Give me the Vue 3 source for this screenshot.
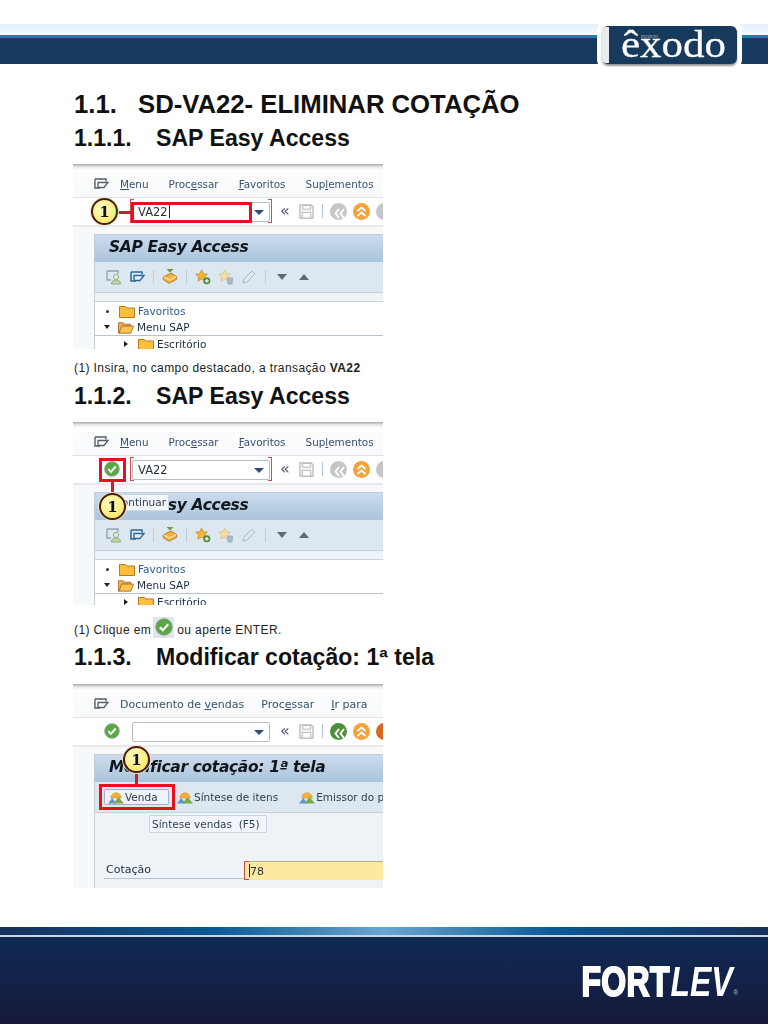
<template>
  <div class="page">
    <svg class="defs" width="0" height="0" aria-hidden="true">
      <defs>
        <symbol id="i-menu" viewBox="0 0 16 14">
          <path d="M2 2h11v2.5M2 2v9h5" fill="none" stroke="#52606e" stroke-width="1.4" />
          <path d="M5 5.5h10l-4 5H5z" fill="#fff" stroke="#52606e" stroke-width="1.3" />
        </symbol>
        <symbol id="i-check" viewBox="0 0 18 18">
          <circle cx="9" cy="9" r="8.2" fill="#5aa845" stroke="#8f9a88" stroke-width="1" />
          <path d="M4.8 9.2l3 3 5.4-6" fill="none" stroke="#fff" stroke-width="2.2" />
        </symbol>
        <symbol id="i-save" viewBox="0 0 16 16">
          <path d="M1 1h12l2 2v12H1z" fill="#f2f3f4" stroke="#b4b9bd" stroke-width="1.3" />
          <path d="M4 1.5h8v4H4zM3.5 9h9v6h-9z" fill="#fff" stroke="#b4b9bd" />
        </symbol>
        <symbol id="i-chev-left" viewBox="0 0 17 17">
          <path d="M9 6L5.5 10.5 9 15M14 6l-3.5 4.5L14 15" fill="none" stroke="#fff" stroke-width="2" />
        </symbol>
        <symbol id="i-chev-up" viewBox="0 0 17 17">
          <path d="M4.5 8l4-3.500 4 3.500M4.500 13l4-3.500 4 3.500" fill="none" stroke="#fff" stroke-width="1.7" />
        </symbol>
        <symbol id="i-folder" viewBox="0 0 16 13">
          <path d="M.5 1.5h6l1 1.5h8v9.5H.5z" fill="#fcbf3c" stroke="#b87a16" />
        </symbol>
        <symbol id="i-folder-open" viewBox="0 0 17 13">
          <path d="M.5 1.5h5l1 1.5h7v2H4L1.5 12.5H.5z" fill="#f3b24a" stroke="#b0702a" />
          <path d="M3.8 5h12.700l-3 7.500H1.200z" fill="#fcc552" stroke="#b0702a" />
        </symbol>
        <symbol id="i-user" viewBox="0 0 16 16">
          <path d="M1 2h11v3M1 2v9h4" fill="none" stroke="#8ea3b4" stroke-width="1.3" />
          <circle cx="10" cy="8" r="2.5" fill="#e6efe0" stroke="#8fa97e" />
          <path d="M5.5 15c0-3 2-4 4.500-4s4.500 1 4.500 4z" fill="#c3d6a8" stroke="#8fa97e" />
        </symbol>
        <symbol id="i-open" viewBox="0 0 16 14">
          <path d="M2 2h11v2.500M2 2v9h5" fill="none" stroke="#2a6a9c" stroke-width="1.5" />
          <path d="M5 5.5h10l-4 5H5z" fill="#e6f0f8" stroke="#2a6a9c" stroke-width="1.4" />
        </symbol>
        <symbol id="i-box" viewBox="0 0 18 18">
          <path d="M5 0h8L9 4z" fill="#6a9a48" />
          <path d="M1.5 9L10 4.500l6.500 4v3L8 16l-6.500-4z" fill="#f4b13c" stroke="#b46f20" />
          <path d="M2 9l6.500 3.500L16 8.500" fill="none" stroke="#fbe6b2" stroke-width="1.3" />
        </symbol>
        <symbol id="i-star-add" viewBox="0 0 17 17">
          <path d="M7 1l1.900 4 4.300.5-3.100 3 .8 4.300L7 10.700l-3.900 2.100.8-4.300-3.100-3 4.300-.5z" fill="#f5b531" stroke="#b9802a" stroke-width=".7" />
          <circle cx="12.5" cy="12.5" r="3.8" fill="#4e8c3f" />
          <path d="M10.5 12.5h4M12.5 10.5v4" stroke="#fff" stroke-width="1.3" />
        </symbol>
        <symbol id="i-star-del" viewBox="0 0 17 17">
          <path d="M7 1l1.900 4 4.300.5-3.100 3 .8 4.300L7 10.700l-3.900 2.100.8-4.300-3.100-3 4.300-.5z" fill="#f6dca0" stroke="#cdb98c" stroke-width=".7" />
          <path d="M10 9.5h5.500l-.6 6.500h-4.300z" fill="#a9bccb" stroke="#8ba0b2" stroke-width=".7" />
        </symbol>
        <symbol id="i-pencil" viewBox="0 0 16 16">
          <path d="M2 14l1-4 8-8 3 3-8 8z" fill="#dfe6ec" stroke="#a9b5bf" />
        </symbol>
        <symbol id="i-hill" viewBox="0 0 17 14">
          <path d="M3 8a5.500 5.500 0 0 1 11 0z" fill="#f5b03a" stroke="#d98b20" stroke-width=".6" />
          <path d="M0 14l4.500-6L9 14z" fill="#5c95c8" />
          <path d="M6 14l5-7 6 7z" fill="#77ab4d" />
        </symbol>
      </defs>
    </svg>

    <header class="top">
      <div class="top-band"></div>
      <div class="logo">
        <div class="logo-inner">
          <span class="logo-tab"></span>
          <span class="logo-word">êxodo</span>
          <span class="logo-small">PROJETO</span>
        </div>
      </div>
    </header>

    <main class="doc">
      <h1 class="h1"><span class="h1-num">1.1.</span>SD-VA22- ELIMINAR COTAÇÃO</h1>

      <section v-for="s in sections" :key="s.num" class="sec" :class="s.id">
        <h2 class="h2"><span class="h2-num">{{ s.num }}</span>{{ s.title }}</h2>

        <div class="shot">
          <div class="menu-row">
            <svg class="menu-ico"><use href="#i-menu" /></svg>
            <span v-for="m in s.menu" :key="m[0]" class="menu-item">{{ m[0] }}<u>{{ m[1] }}</u>{{ m[2] }}</span>
          </div>

          <div class="tool-row">
            <span class="check-slot">
              <svg v-if="s.check" class="check"><use href="#i-check" /></svg>
            </span>
            <div class="field-wrap">
              <span class="cmd-field">
                <span class="cmd-text">{{ s.cmd }}<i v-if="s.id === 's1'" class="text-caret"></i></span>
                <span class="cmd-arrow"></span>
              </span>
            </div>
            <span class="dbl">«</span>
            <svg class="save"><use href="#i-save" /></svg>
            <span class="vsep"></span>
            <span class="round" :class="s.id === 's3' ? 'green' : 'grey'">
              <svg><use href="#i-chev-left" /></svg>
            </span>
            <span class="round orange"><svg><use href="#i-chev-up" /></svg></span>
            <span class="round" :class="s.id === 's3' ? 'dark-orange' : 'grey'"></span>
          </div>

          <div class="panel">
            <div class="panel-title">{{ s.panel }}</div>

            <div v-if="s.id !== 's3'" class="panel-tools">
              <svg class="pi"><use href="#i-user" /></svg>
              <svg class="pi"><use href="#i-open" /></svg>
              <span class="psep"></span>
              <svg class="pi"><use href="#i-box" /></svg>
              <span class="psep"></span>
              <svg class="pi"><use href="#i-star-add" /></svg>
              <svg class="pi"><use href="#i-star-del" /></svg>
              <svg class="pi"><use href="#i-pencil" /></svg>
              <span class="psep"></span>
              <span class="tri-down"></span>
              <span class="tri-up"></span>
            </div>
            <div v-else class="panel-tools buttons">
              <span class="sap-btn boxed"><svg class="hill"><use href="#i-hill" /></svg>Venda</span>
              <span class="sap-btn"><svg class="hill"><use href="#i-hill" /></svg>Síntese de itens</span>
              <span class="sap-btn"><svg class="hill"><use href="#i-hill" /></svg>Emissor do p</span>
            </div>

            <div v-if="s.id !== 's3'" class="tree">
              <div class="tree-row first"><span class="bullet"></span><svg class="folder"><use href="#i-folder" /></svg><span class="fav">Favoritos</span></div>
              <div class="tree-row line"><span class="caret-down"></span><svg class="folder"><use href="#i-folder-open" /></svg>Menu SAP</div>
              <div class="tree-row sub"><span class="caret-right"></span><svg class="folder"><use href="#i-folder" /></svg>Escritório</div>
            </div>
            <div v-else class="form">
              <span class="form-label">Cotação</span>
              <span class="form-input"><i class="req"></i><i class="text-caret"></i>78</span>
            </div>
          </div>

          <!-- anotações por cima do print -->
          <span class="mark"></span>
          <span class="lead"></span>
          <span v-if="s.tip" class="tip">{{ s.tip }}</span>
          <span class="bubble">1</span>
        </div>

        <p v-if="s.id === 's1'" class="cap">(1) Insira, no campo destacado, a transação <b>VA22</b></p>
        <p v-if="s.id === 's2'" class="cap">(1) Clique em<span class="cap-ico"><svg><use href="#i-check" /></svg></span>ou aperte ENTER.</p>
      </section>
    </main>

    <footer class="foot">
      <div class="foot-strip"></div>
      <div class="foot-body">
        <span class="brand"><b>FORT</b><i>LEV</i><small>®</small></span>
      </div>
    </footer>
  </div>
</template>

<script setup>
const sapMenu = [
  ["", "M", "enu"],
  ["Proc", "e", "ssar"],
  ["", "F", "avoritos"],
  ["Sup", "l", "ementos"],
];

const sections = [
  {
    id: "s1",
    num: "1.1.1.",
    title: "SAP Easy Access",
    menu: sapMenu,
    check: false,
    cmd: "VA22",
    panel: "SAP Easy Access",
  },
  {
    id: "s2",
    num: "1.1.2.",
    title: "SAP Easy Access",
    menu: sapMenu,
    check: true,
    cmd: "VA22",
    panel: "SAP Easy Access",
    tip: "Continuar",
  },
  {
    id: "s3",
    num: "1.1.3.",
    title: "Modificar cotação: 1ª tela",
    menu: [
      ["Documento de ", "v", "endas"],
      ["Proc", "e", "ssar"],
      ["", "I", "r para"],
    ],
    check: true,
    cmd: "",
    panel: "Modificar cotação: 1ª tela",
    tip: "Síntese vendas  (F5)",
  },
];
</script>

<style>
html,
body {
  margin: 0;
  background: #fff;
}
</style>

<style scoped>
.page {
  width: 768px;
  height: 1024px;
  overflow: hidden;
  background: #fff;
  font-family: "Liberation Sans", Arial, sans-serif;
  color: #111;
}

.defs {
  position: absolute;
}

/* topo */
.top {
  position: relative;
  height: 64px;
}

.top-band {
  position: absolute;
  left: 0;
  right: 0;
  top: 24px;
  height: 40px;
  background: linear-gradient(
    to bottom,
    #e4f1fb 0,
    #f3f9fd 11px,
    #1c7fb0 11px,
    #1c7fb0 14px,
    #163b5e 14px,
    #163b5e 100%
  );
}

.logo {
  position: absolute;
  left: 597px;
  top: 22px;
  width: 145px;
  height: 46px;
  background: #fff;
  border-radius: 8px;
  display: flex;
  align-items: center;
  justify-content: center;
}

.logo-inner {
  position: relative;
  width: 135px;
  height: 38px;
  background: #173a5c;
  border-radius: 6px;
  box-shadow: 0 2px 2px rgba(60, 70, 80, 0.55);
  display: flex;
  align-items: center;
  padding-left: 19px;
  box-sizing: border-box;
}

.logo-tab {
  position: absolute;
  left: 0;
  top: 1px;
  bottom: 1px;
  width: 7px;
  background: #e8ecef;
  border-radius: 4px 0 0 4px;
}

.logo-word {
  font-family: "Liberation Serif", serif;
  font-size: 43px;
  line-height: 38px;
  color: #fff;
  transform: scaleY(0.88);
  -webkit-text-stroke: 0.3px #fff;
}

.logo-small {
  position: absolute;
  left: 39px;
  top: 8px;
  font-family: "Liberation Serif", serif;
  font-size: 4px;
  color: #b9c6d2;
}

/* documento */
.doc {
  padding-left: 74px;
}

.h1 {
  margin: 26px 0 0;
  font-size: 25.7px;
  line-height: 28px;
  font-weight: 700;
  white-space: nowrap;
}

.h1-num {
  display: inline-block;
  width: 64px;
}

.h2 {
  margin: 0;
  font-size: 23.1px;
  line-height: 26px;
  font-weight: 700;
  white-space: nowrap;
}

.h2-num {
  display: inline-block;
  width: 82px;
}

.sec {
  margin-top: 7px;
}

.s3 {
  margin-top: 6px;
}

.cap {
  margin: 11px 0 0;
  height: 16px;
  font-size: 12px;
  line-height: 16px;
  letter-spacing: 0.4px;
  color: #222;
  white-space: nowrap;
}

.s2 .cap {
  margin-top: 17px;
  display: flex;
  align-items: center;
}

.cap-ico {
  width: 21px;
  height: 21px;
  margin: -6px 3px 0 2px;
  background: #dbe6ef;
  display: flex;
  align-items: center;
  justify-content: center;
}

.cap-ico svg {
  width: 18px;
  height: 18px;
}

/* print do SAP */
.shot {
  position: relative;
  width: 310px;
  height: 185px;
  margin: 13px 0 0 -1px;
  overflow: hidden;
  background: #f6f8fa;
  font-family: "DejaVu Sans", sans-serif;
  filter: blur(0.35px);
}

.s2 .shot {
  height: 183px;
}

.s3 .shot {
  height: 204px;
  margin-top: 14px;
}

.menu-row {
  height: 34px;
  box-sizing: border-box;
  padding: 7px 0 0 20px;
  display: flex;
  align-items: center;
  background: linear-gradient(to bottom, #a6a9ac 0, #e9ebed 3px, #fdfdfe 6px, #f8f9fa 100%);
  border-bottom: 1px solid #dfe3e7;
  font-size: 10.4px;
  color: #37526f;
}

.s3 .menu-row {
  font-size: 11px;
}

.menu-ico {
  flex: none;
  width: 16px;
  height: 14px;
  margin-right: 11px;
}

.menu-item {
  flex: none;
  margin-right: 20px;
  white-space: nowrap;
}

.s3 .menu-item {
  margin-right: 17px;
}

.tool-row {
  height: 29px;
  box-sizing: border-box;
  padding: 0 0 1px 31px;
  display: flex;
  align-items: center;
  background: #fff;
  border-bottom: 2px solid #e6eaee;
}

.check-slot {
  flex: none;
  width: 16px;
  height: 16px;
  margin-right: 10px;
}

.check {
  display: block;
  width: 16px;
  height: 16px;
}

.field-wrap {
  flex: none;
  position: relative;
  width: 142px;
  height: 24px;
  padding: 3px 2px;
  box-sizing: border-box;
}

.field-wrap::before,
.field-wrap::after {
  content: "";
  position: absolute;
  top: 0;
  bottom: 0;
  width: 3px;
  border: 1.5px solid #d05050;
}

.field-wrap::before {
  left: 0;
  border-right: 0;
}

.field-wrap::after {
  right: 0;
  border-left: 0;
}

.s3 .field-wrap::before,
.s3 .field-wrap::after {
  display: none;
}

.cmd-field {
  height: 18px;
  display: flex;
  align-items: center;
  padding: 0 5px;
  background: #fff;
  border: 1px solid #b5bcc2;
  border-radius: 2px;
  font-size: 11.5px;
  color: #28323c;
}

.cmd-text {
  flex: 1;
}

.text-caret {
  display: inline-block;
  width: 1px;
  height: 13px;
  margin-left: 1px;
  vertical-align: -2px;
  background: #222;
}

.cmd-arrow {
  width: 0;
  height: 0;
  border-left: 5px solid transparent;
  border-right: 5px solid transparent;
  border-top: 5px solid #2a4f78;
}

.dbl {
  flex: none;
  width: 20px;
  margin-left: 3px;
  font-size: 16px;
  line-height: 16px;
  text-align: center;
  color: #556;
}

.save {
  flex: none;
  width: 15px;
  height: 15px;
  margin-left: 4px;
}

.vsep {
  flex: none;
  width: 1px;
  height: 14px;
  margin: 0 7px 0 8px;
  background: #a9c4da;
}

.round {
  flex: none;
  width: 17px;
  height: 17px;
  margin-right: 6px;
  border-radius: 50%;
}

.round svg {
  display: block;
  width: 17px;
  height: 17px;
}

.grey {
  background: #c4c6c8;
}

.green {
  background: #4f8f3c;
}

.orange {
  background: #f3a33a;
}

.dark-orange {
  background: #d76a22;
}

.panel {
  margin: 7px 0 0 21px;
  border-left: 1px solid #c3ced8;
  background: #eef3f7;
  height: 300px;
}

.panel-title {
  height: 28px;
  box-sizing: border-box;
  padding-left: 14px;
  background: linear-gradient(to bottom, #cddced, #a9c4db);
  border-top: 1px solid #c1d0dd;
  font-size: 15.5px;
  line-height: 25px;
  letter-spacing: -0.35px;
  font-weight: 700;
  font-style: italic;
  color: #10161c;
  white-space: nowrap;
}

.panel-tools {
  height: 31px;
  box-sizing: border-box;
  padding-left: 11px;
  display: flex;
  align-items: center;
  gap: 7px;
  background: #dde7ef;
  border-bottom: 1px solid #c6d2dc;
}

.pi {
  flex: none;
  width: 16px;
  height: 16px;
}

.psep {
  flex: none;
  width: 1px;
  height: 14px;
  margin: 0 1px;
  background: #c0ced9;
}

.tri-down,
.tri-up {
  flex: none;
  width: 0;
  height: 0;
  border-left: 5.5px solid transparent;
  border-right: 5.5px solid transparent;
}

.tri-down {
  margin-left: 3px;
  border-top: 6px solid #5d6a75;
}

.tri-up {
  margin-left: 5px;
  border-bottom: 6px solid #5d6a75;
}

.buttons {
  gap: 8px;
  padding-left: 9px;
  font-size: 10.5px;
  color: #2c3e50;
}

.sap-btn {
  flex: none;
  height: 16px;
  display: flex;
  align-items: center;
  gap: 1px;
  white-space: nowrap;
}

.sap-btn + .sap-btn + .sap-btn {
  margin-left: 13px;
}

.boxed {
  width: 65px;
  padding-left: 3px;
  box-sizing: border-box;
  background: #eef3f8;
  border: 1px solid #9fb3c6;
  border-radius: 2px;
}

.hill {
  flex: none;
  width: 16px;
  height: 14px;
}

.tree {
  margin-top: 8px;
  background: #fff;
  border-top: 1px solid #c6d2dc;
  font-size: 10.5px;
  color: #22313f;
}

.tree-row {
  height: 16px;
  display: flex;
  align-items: center;
  padding-left: 9px;
  white-space: nowrap;
}

.tree-row.first {
  margin-top: 1px;
}

.tree-row.line {
  border-bottom: 1px solid #b7c3cd;
}

.tree-row.sub {
  padding-left: 29px;
}

.fav {
  color: #2b5d94;
}

.bullet {
  flex: none;
  width: 3px;
  height: 3px;
  margin: 0 10px 0 2px;
  border-radius: 50%;
  background: #333;
}

.caret-down {
  flex: none;
  width: 0;
  height: 0;
  margin-right: 8px;
  border-left: 3.5px solid transparent;
  border-right: 3.5px solid transparent;
  border-top: 4px solid #222;
}

.caret-right {
  flex: none;
  width: 0;
  height: 0;
  margin-right: 10px;
  border-top: 3.5px solid transparent;
  border-bottom: 3.5px solid transparent;
  border-left: 4px solid #222;
}

.folder {
  flex: none;
  width: 16px;
  height: 13px;
  margin-right: 3px;
}

.form {
  position: relative;
  height: 110px;
  background: #eef3f7;
  font-size: 11px;
  color: #28323c;
}

.form-label {
  position: absolute;
  left: 11px;
  top: 50px;
}

.form-label::after {
  content: "";
  position: absolute;
  left: -2px;
  top: 15px;
  width: 145px;
  height: 1px;
  background: #b7c3cd;
}

.form-input {
  position: absolute;
  left: 150px;
  top: 48px;
  width: 140px;
  height: 19px;
  padding-left: 3px;
  box-sizing: border-box;
  line-height: 19px;
  background: #fde9a0;
  border-top: 1px solid #b9b08a;
}

.req {
  position: absolute;
  left: -1px;
  top: -1px;
  bottom: 0;
  width: 4px;
  border: 1px solid #c94a4a;
  border-right: 0;
}

/* anotações */
.mark {
  position: absolute;
  box-sizing: border-box;
  border: 3px solid #e8101c;
}

.lead {
  position: absolute;
  background: #c8202a;
}

.bubble {
  position: absolute;
  width: 27px;
  height: 27px;
  box-sizing: border-box;
  display: flex;
  align-items: center;
  justify-content: center;
  border-radius: 50%;
  border: 2px solid #4a1c18;
  background: radial-gradient(circle at 40% 35%, #ffffc8, #fbe96a 75%);
  box-shadow: 0 0 0 1px #e9e6c0;
  font-family: "DejaVu Serif", serif;
  font-size: 15px;
  font-weight: 700;
  color: #111;
}

.tip {
  position: absolute;
  box-sizing: border-box;
  height: 17px;
  padding: 0 2px;
  background: #f2f6fa;
  border: 1px solid #ccd6df;
  border-radius: 1px;
  font-size: 10.5px;
  line-height: 15px;
  color: #2c3e50;
  white-space: pre;
}

.s1 .mark {
  left: 58px;
  top: 38px;
  width: 121px;
  height: 21px;
}

.s1 .lead {
  left: 45px;
  top: 47px;
  width: 14px;
  height: 3px;
}

.s1 .bubble {
  left: 18px;
  top: 34px;
}

.s2 .mark {
  left: 26px;
  top: 36px;
  width: 27px;
  height: 24px;
}

.s2 .lead {
  left: 38px;
  top: 60px;
  width: 3px;
  height: 14px;
}

.s2 .bubble {
  left: 26px;
  top: 71px;
}

.s2 .tip {
  left: 36px;
  top: 72px;
  width: 60px;
  text-align: right;
}

.s3 .mark {
  left: 26px;
  top: 100px;
  width: 76px;
  height: 26px;
}

.s3 .lead {
  left: 62px;
  top: 86px;
  width: 3px;
  height: 15px;
}

.s3 .bubble {
  left: 50px;
  top: 62px;
}

.s3 .tip {
  left: 76px;
  top: 131px;
  width: 118px;
  height: 18px;
  line-height: 16px;
}

/* rodapé */
.foot {
  margin-top: 39px;
}

.foot-strip {
  height: 8px;
  background: linear-gradient(
    to right,
    #17305c 0,
    #0a5a94 28%,
    #6aa6d0 50%,
    #0a5a94 72%,
    #17305c 100%
  );
  border-bottom: 2px solid #c9d6e4;
}

.foot-body {
  height: 87px;
  box-sizing: border-box;
  padding: 29px 30px 0 0;
  display: flex;
  align-items: flex-start;
  justify-content: flex-end;
  background: linear-gradient(to bottom, #0f2a54, #161a3c);
}

.brand {
  display: flex;
  align-items: flex-start;
  font-size: 42px;
  line-height: 32px;
  color: #fff;
  white-space: nowrap;
  transform: scaleX(0.76);
  transform-origin: right center;
}

.brand b {
  font-weight: 700;
  -webkit-text-stroke: 2px #fff;
  letter-spacing: 0.5px;
}

.brand i {
  font-weight: 700;
  margin-left: 1px;
}

.brand small {
  align-self: flex-end;
  margin-left: 1px;
  font-size: 8px;
  line-height: 10px;
  color: #b8c4d4;
}
</style>
